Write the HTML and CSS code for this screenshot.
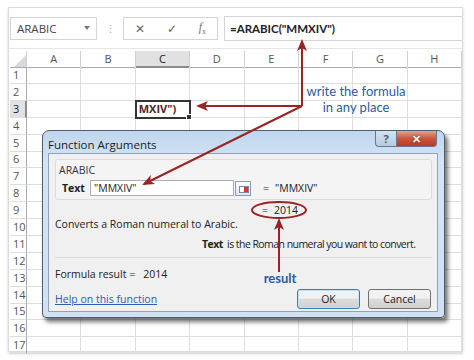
FILE: index.html
```html
<!DOCTYPE html>
<html lang="en">
  <head>
    <meta charset="UTF-8" />
    <title>ARABIC function</title>
    <link rel="stylesheet" href="styles.css">
  </head>
  <body>
    <div class="shot">
      <div class="toolbar">
        <div class="namebox">
          <span>ARABIC</span>
          <span class="caret"></span>
        </div>
        <div class="grip">⋮</div>
        <div class="fnbtns">
          <span class="fn-x">✕</span>
          <span class="fn-ok">✓</span>
          <span class="fn-fx"><i>f</i><sub>x</sub></span>
        </div>
        <div class="formula">=ARABIC("MMXIV")</div>
      </div>

      <div class="sheet">
        <div class="row head">
          <div class="corner"></div><div>A</div><div>B</div><div class="sel">C</div><div>D</div><div>E</div><div>F</div><div>G</div><div>H</div>
        </div>
        <div class="row"><div class="num">1</div><div></div><div></div><div></div><div></div><div></div><div></div><div></div><div></div></div>
        <div class="row"><div class="num">2</div><div></div><div></div><div></div><div></div><div></div><div></div><div></div><div></div></div>
        <div class="row"><div class="num sel">3</div><div></div><div></div><div class="active">MXIV")</div><div></div><div></div><div></div><div></div><div></div></div>
        <div class="row"><div class="num">4</div><div></div><div></div><div></div><div></div><div></div><div></div><div></div><div></div></div>
        <div class="row"><div class="num">5</div><div></div><div></div><div></div><div></div><div></div><div></div><div></div><div></div></div>
        <div class="row"><div class="num">6</div><div></div><div></div><div></div><div></div><div></div><div></div><div></div><div></div></div>
        <div class="row"><div class="num">7</div><div></div><div></div><div></div><div></div><div></div><div></div><div></div><div></div></div>
        <div class="row"><div class="num">8</div><div></div><div></div><div></div><div></div><div></div><div></div><div></div><div></div></div>
        <div class="row"><div class="num">9</div><div></div><div></div><div></div><div></div><div></div><div></div><div></div><div></div></div>
        <div class="row"><div class="num">10</div><div></div><div></div><div></div><div></div><div></div><div></div><div></div><div></div></div>
        <div class="row"><div class="num">11</div><div></div><div></div><div></div><div></div><div></div><div></div><div></div><div></div></div>
        <div class="row"><div class="num">12</div><div></div><div></div><div></div><div></div><div></div><div></div><div></div><div></div></div>
        <div class="row"><div class="num">13</div><div></div><div></div><div></div><div></div><div></div><div></div><div></div><div></div></div>
        <div class="row"><div class="num">14</div><div></div><div></div><div></div><div></div><div></div><div></div><div></div><div></div></div>
        <div class="row"><div class="num">15</div><div></div><div></div><div></div><div></div><div></div><div></div><div></div><div></div></div>
        <div class="row"><div class="num">16</div><div></div><div></div><div></div><div></div><div></div><div></div><div></div><div></div></div>
        <div class="row"><div class="num">17</div><div></div><div></div><div></div><div></div><div></div><div></div><div></div><div></div></div>
      </div>

      <div class="dialog">
        <div class="titlebar">
          <span class="title">Function Arguments</span>
          <div class="winbtns">
            <span class="help">?</span>
            <span class="close">✕</span>
          </div>
        </div>
        <div class="dlg-body">
          <div class="group">
            <div class="group-name">ARABIC</div>
            <div class="arg">
              <b>Text</b>
              <div class="input">"MMXIV"</div>
              <span class="refbtn"></span>
              <span class="eq">=</span>
              <span class="val">"MMXIV"</span>
            </div>
          </div>
          <div class="res"><span class="eq">=</span><span class="val">2014</span></div>
          <p class="desc">Converts a Roman numeral to Arabic.</p>
          <p class="argdesc"><b>Text</b>&nbsp; is the Roman numeral you want to convert.</p>
          <div class="foot">
            <div class="left">
              <p>Formula result =&nbsp;&nbsp; 2014</p>
              <a href="#">Help on this function</a>
            </div>
            <div class="buttons">
              <button type="button" class="ok">OK</button>
              <button type="button">Cancel</button>
            </div>
          </div>
        </div>
      </div>
    </div>

    <!-- callouts drawn over the screenshot -->
    <svg class="notes" width="474" height="360" viewBox="0 0 474 360">
      <defs>
        <marker id="head" markerWidth="12" markerHeight="10" refX="10" refY="5" orient="auto" markerUnits="userSpaceOnUse">
          <path d="M0,0 L12,5 L0,10 L3,5 z" fill="#9a2424" />
        </marker>
      </defs>
      <g stroke="#9a2424" stroke-width="2" fill="none">
        <path d="M302,106 V41" marker-end="url(#head)" />
        <path d="M302,106 H198" marker-end="url(#head)" />
        <path d="M302,106 L144,184" marker-end="url(#head)" />
        <path d="M279,272 V220" marker-end="url(#head)" />
        <ellipse cx="279" cy="210" rx="27" ry="8" />
      </g>
      <text class="note" x="356" y="96" text-anchor="middle">write the formula</text>
      <text class="note" x="356" y="112" text-anchor="middle">in any place</text>
      <text class="note bold" x="280" y="283" text-anchor="middle">result</text>
    </svg>
  </body>
</html>
```

FILE: styles.css
```css
body {
  margin: 0;
  width: 474px;
  height: 360px;
  background: #fff;
  font-family: "Open Sans", "Noto Sans", sans-serif;
  color: #333;
  position: relative;
  overflow: hidden;
}

.shot {
  position: relative;
  margin: 7px 0 0 8px;
  width: 453px;
  height: 343px;
  border: 1px solid #dcdcdc;
  box-shadow: 0 2px 3px rgba(0, 0, 0, 0.15);
  background: #fff;
}

/* formula bar */
.toolbar {
  display: flex;
  align-items: center;
  gap: 6px;
  height: 40px;
  padding: 0 0 0 1px;
  border-bottom: 1px solid #e6e6e6;
}
.namebox {
  width: 87px;
  height: 23px;
  border: 1px solid #d4d4d4;
  display: flex;
  align-items: center;
  justify-content: space-between;
  padding: 0 6px;
  box-sizing: border-box;
  font-size: 11.5px;
  color: #444;
}
.caret {
  border: 3px solid transparent;
  border-top: 4px solid #777;
  margin-top: 3px;
}
.grip {
  color: #aaa;
  font-size: 11px;
  width: 14px;
  text-align: center;
}
.fnbtns {
  display: flex;
  align-items: center;
  justify-content: space-around;
  width: 95px;
  height: 23px;
  border: 1px solid #d4d4d4;
  box-sizing: border-box;
  color: #666;
  font-size: 12px;
}
.fn-fx {
  font-family: "Liberation Serif", serif;
  font-size: 12px;
  color: #777;
}
.fn-fx sub {
  font-size: 8px;
}
.formula {
  flex: 1;
  height: 23px;
  border: 1px solid #d4d4d4;
  border-right: 0;
  display: flex;
  align-items: center;
  padding-left: 5px;
  font-family: "Lato", sans-serif;
  font-weight: bold;
  font-size: 11.5px;
  color: #222;
}

/* sheet grid */
.sheet {
  margin-top: 2px;
  padding-left: 1px;
}
.row {
  display: grid;
  grid-template-columns: 17px repeat(8, 1fr);
  height: 16.9px;
}
.row > div {
  border-right: 1px solid #dedede;
  border-bottom: 1px solid #dedede;
  font-size: 11px;
  line-height: 16px;
}
.row.head {
  height: 16px;
}
.row.head > div {
  text-align: center;
  color: #555;
  border-bottom: 1px solid #ababab;
  border-right-color: #d0d0d0;
  font-size: 11px;
  line-height: 15px;
}
.row.head .sel {
  background: #e1e1e1;
  border-bottom: 2px solid #8c8c8c;
  color: #222;
}
.corner {
  background: linear-gradient(135deg, transparent 62%, #d9d9d9 63%) no-repeat;
}
.num {
  color: #555;
  padding-left: 3px;
  border-right: 1px solid #ababab !important;
}
.num.sel {
  background: #e1e1e1;
  border-right: 2px solid #8c8c8c !important;
  color: #222;
}
.active {
  position: relative;
  outline: 2px solid #333;
  outline-offset: -1px;
  color: #5a2222;
  font-weight: bold;
  padding-left: 3px;
  font-size: 11px;
}
.active::after {
  content: "";
  position: absolute;
  right: -3px;
  bottom: -3px;
  width: 4px;
  height: 4px;
  background: #333;
  border: 1px solid #fff;
}

/* dialog window over the sheet */
.dialog {
  position: absolute;
  left: 33px;
  top: 122px;
  width: 403px;
  height: 188px;
  box-sizing: border-box;
  border: 1px solid #4f5d6d;
  border-radius: 7px 7px 4px 4px;
  background: linear-gradient(#bfd6ee, #d4e4f4 30px, #cfe1f3);
  padding: 0 6px 5px 5px;
  display: flex;
  flex-direction: column;
  box-shadow: 3px 4px 4px rgba(0, 0, 0, 0.55);
}
.titlebar {
  height: 22px;
  display: flex;
  justify-content: space-between;
  align-items: flex-start;
}
.title {
  font-size: 11.5px;
  color: #1d1d1d;
  margin-top: 6px;
}
.winbtns {
  display: flex;
  margin-right: 1px;
}
.winbtns span {
  height: 15px;
  line-height: 15px;
  text-align: center;
  color: #fff;
  font-size: 11px;
  font-weight: bold;
  border: 1px solid #6a7a8a;
  border-top: 0;
}
.help {
  width: 20px;
  background: linear-gradient(#d5e3f1, #b6cbe0);
  color: #4b5e72 !important;
  border-radius: 0 0 0 4px;
}
.close {
  width: 39px;
  background: linear-gradient(#e6a08c, #c9583f 50%, #b83a22);
  border-left: 0 !important;
  border-radius: 0 0 4px 0;
  text-shadow: 0 0 2px #6d1a0a;
}
.dlg-body {
  flex: 1;
  background: #f0f0f0;
  border: 1px solid #8ea3b9;
  padding: 5px 5px 0 6px;
  font-size: 10.5px;
  color: #222;
  white-space: nowrap;
}
.dlg-body p {
  margin: 0;
}
.group {
  height: 41px;
  box-sizing: border-box;
  border: 1px solid #dcdcdc;
  border-radius: 3px;
  background: #f4f4f4;
  padding: 3px 0 0 3px;
}
.group-name {
  color: #333;
  line-height: 14px;
}
.arg {
  display: flex;
  align-items: center;
  margin-top: 3px;
}
.arg b {
  width: 28px;
  padding-left: 3px;
}
.input {
  width: 144px;
  height: 16px;
  box-sizing: border-box;
  border: 1px solid #abadb3;
  background: #fff;
  line-height: 14px;
  padding-left: 3px;
}
.refbtn {
  width: 16px;
  height: 15px;
  margin-left: 1px;
  box-sizing: border-box;
  border: 1px solid #8a9bb0;
  background: linear-gradient(#fff, #dfe6ee);
  position: relative;
}
.refbtn::after {
  content: "";
  position: absolute;
  left: 3px;
  top: 4px;
  width: 8px;
  height: 5px;
  border: 1px solid #7d8ba0;
  background: linear-gradient(90deg, #fff 50%, #d33 50%);
}
.eq {
  width: 12px;
  margin-left: 12px;
}
.res {
  display: flex;
  padding-left: 207px;
  margin-top: 4px;
  line-height: 13px;
}
.res .eq {
  margin-left: 0;
}
.desc {
  margin-top: 0 !important;
}
.argdesc {
  margin-top: 6px !important;
  padding-left: 147px;
  letter-spacing: -0.55px;
}
.foot {
  display: flex;
  justify-content: space-between;
  align-items: flex-end;
  margin-top: 6px;
  border-top: 1px solid #dadada;
  padding-top: 9px;
}
.left p {
  margin-bottom: 11px !important;
}
.left a {
  color: #2a5db0;
}
.buttons {
  display: flex;
  gap: 8px;
  margin-right: 1px;
  margin-bottom: -3px;
}
.buttons button {
  width: 63px;
  height: 20px;
  font-family: inherit;
  font-size: 10.5px;
  color: #222;
  border: 1px solid #707070;
  border-radius: 3px;
  background: linear-gradient(#f2f2f2 45%, #dddddd 50%, #cfcfcf);
}
.buttons .ok {
  border-color: #3c7fb1;
  box-shadow: inset 0 0 0 1px #bfe2f7;
}

/* callout layer */
.notes {
  position: absolute;
  left: 0;
  top: 0;
}
.note {
  font-family: "Lato", sans-serif;
  font-size: 13px;
  fill: #2c5aa4;
}
.note.bold {
  font-weight: bold;
}
```
